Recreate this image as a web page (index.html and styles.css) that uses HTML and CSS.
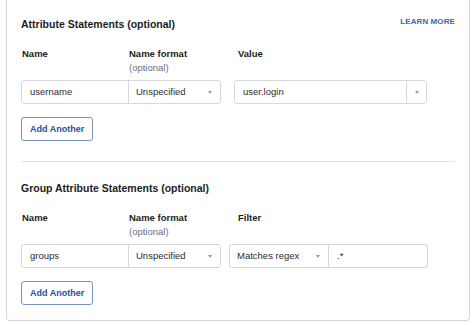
FILE: index.html
```html
<!DOCTYPE html>
<html lang="en">

<head>
  <meta charset="UTF-8">
  <link rel="stylesheet" href="styles.css">
</head>

<body>
  <div class="page">
    <div class="card">
      <!-- attribute statements -->
      <section class="group">
        <div class="group-head">
          <h2>Attribute Statements (optional)</h2>
          <a class="learn" href="javascript:;">LEARN MORE</a>
        </div>
        <div class="cols">
          <div class="col-label">Name</div>
          <div class="col-label">Name format<span class="hint">(optional)</span></div>
          <div class="col-label">Value</div>
        </div>
        <div class="fields">
          <div class="combo">
            <div class="field name-field">username</div>
            <div class="select fmt-select">Unspecified<i class="caret"></i></div>
          </div>
          <div class="combo value-combo">
            <div class="field value-field">user.login</div>
            <div class="drop"><i class="caret"></i></div>
          </div>
        </div>
        <button class="add">Add Another</button>
      </section>

      <div class="divider"></div>

      <!-- group attribute statements -->
      <section class="group">
        <div class="group-head">
          <h2>Group Attribute Statements (optional)</h2>
        </div>
        <div class="cols">
          <div class="col-label">Name</div>
          <div class="col-label">Name format<span class="hint">(optional)</span></div>
          <div class="col-label">Filter</div>
        </div>
        <div class="fields">
          <div class="combo">
            <div class="field name-field">groups</div>
            <div class="select fmt-select">Unspecified<i class="caret"></i></div>
          </div>
          <div class="combo filter-combo">
            <div class="select match-select">Matches regex<i class="caret"></i></div>
            <div class="field regex-field">.*</div>
          </div>
        </div>
        <button class="add">Add Another</button>
      </section>
    </div>
  </div>
</body>

</html>
```

FILE: styles.css
```css
* {
  box-sizing: border-box;
}

body {
  margin: 0;
  background: #fff;
  font-family: "Liberation Sans", Arial, sans-serif;
  color: #1d1d21;
}

.page {
  padding: 0 6px;
}

.card {
  width: 464px;
  border: 1px solid #d6d6d9;
  border-top: 0;
  border-radius: 0 0 4px 4px;
  padding: 17px 14px 15px 14px;
}

.group-head {
  display: flex;
  justify-content: space-between;
  align-items: flex-start;
}

h2 {
  margin: 0;
  font-size: 10.5px;
  line-height: 14px;
  font-weight: bold;
}

.learn {
  font-size: 8px;
  line-height: 10px;
  font-weight: bold;
  color: #3a68ad;
  text-decoration: none;
  letter-spacing: 0.1px;
}

.cols {
  display: grid;
  grid-template-columns: 107px 109px auto;
  margin-top: 16px;
  padding-left: 1px;
}

.col-label {
  font-size: 9.5px;
  line-height: 14px;
  font-weight: bold;
}

.hint {
  display: block;
  font-weight: normal;
  color: #6e6e78;
}

.fields {
  display: flex;
  margin-top: 5px;
}

.combo {
  display: flex;
  height: 24px;
  border: 1px solid #d7d7dc;
  border-radius: 3px;
  font-size: 9.5px;
  line-height: 22px;
  color: #2b2b31;
}

.field,
.select {
  padding: 0 8px;
}

.name-field {
  width: 107px;
  border-right: 1px solid #d7d7dc;
}

.select {
  display: flex;
  justify-content: space-between;
  align-items: center;
  padding-right: 8px;
  padding-left: 7px;
}

.fmt-select {
  width: 91px;
}

.caret {
  width: 0;
  height: 0;
  border-left: 2px solid transparent;
  border-right: 2px solid transparent;
  border-top: 3px solid #9a9aa2;
}

.value-combo {
  margin-left: 13px;
  width: 193px;
}

.value-field {
  flex: 1;
}

.drop {
  width: 20px;
  border-left: 1px solid #d7d7dc;
  display: flex;
  justify-content: center;
  align-items: center;
}

.filter-combo {
  margin-left: 8px;
  width: 199px;
}

.match-select {
  width: 99px;
  border-right: 1px solid #d7d7dc;
}

.regex-field {
  flex: 1;
}

.add {
  display: block;
  margin-top: 13px;
  height: 24px;
  padding: 0 8px;
  border: 1px solid #7a93bd;
  border-radius: 3px;
  background: #fff;
  font-family: inherit;
  font-size: 9px;
  font-weight: bold;
  color: #1f4f9e;
}

.divider {
  height: 1px;
  background: #e2e2e4;
  margin: 20px 0 19px;
}
```
